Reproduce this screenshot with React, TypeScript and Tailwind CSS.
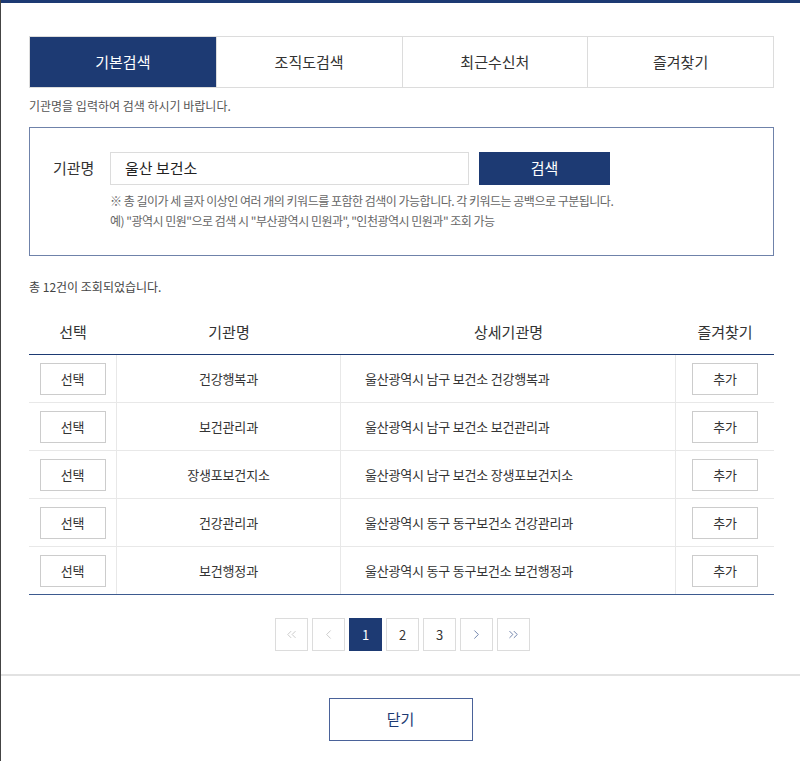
import { ChevronLeft, ChevronRight, ChevronsLeft, ChevronsRight } from "lucide-react"

const tabs = ["기본검색", "조직도검색", "최근수신처", "즐겨찾기"]

const rows = [
  { name: "건강행복과", detail: "울산광역시 남구 보건소 건강행복과" },
  { name: "보건관리과", detail: "울산광역시 남구 보건소 보건관리과" },
  { name: "장생포보건지소", detail: "울산광역시 남구 보건소 장생포보건지소" },
  { name: "건강관리과", detail: "울산광역시 동구 동구보건소 건강관리과" },
  { name: "보건행정과", detail: "울산광역시 동구 동구보건소 보건행정과" },
]

export default function App() {
  return (
    <div
      className="h-[761px] w-[800px] overflow-hidden bg-white border-l border-[#444] text-[#333]"
      style={{ fontFamily: '"Noto Sans CJK KR", "Noto Sans", sans-serif' }}
    >
      {/* top bar */}
      <div className="h-[3px] bg-[#1d3a73]" />

      <div className="pl-[28px] pr-[26px] pt-[33px]">
        {/* tabs */}
        <div className="grid grid-cols-4 h-[52px] border border-[#dcdcdc]">
          {tabs.map((t, i) => (
            <div
              key={t}
              className={
                i === 0
                  ? "flex items-center justify-center bg-[#1d3a73] text-white text-[15px]"
                  : "flex items-center justify-center border-l border-[#dcdcdc] text-[15px] text-[#333]"
              }
            >
              {t}
            </div>
          ))}
        </div>

        <p className="mt-[9px] text-[12px] leading-[18px] text-[#555]">기관명을 입력하여 검색 하시기 바랍니다.</p>

        {/* search box */}
        <div className="mt-[12px] border border-[#6f82aa] pl-[23px] pt-[24px] pb-[24px]">
          <div className="flex items-center">
            <span className="w-[57px] text-[15px] text-[#333]">기관명</span>
            <div className="flex h-[33px] w-[359px] items-center border border-[#dcdcdc] px-[14px] text-[15px] text-[#222]">
              울산 보건소
            </div>
            <button className="ml-[10px] h-[33px] w-[131px] bg-[#1d3a73] text-[15px] text-white">검색</button>
          </div>
          <div className="ml-[57px] mt-[6px] text-[12px] leading-[20px] tracking-[-0.5px] text-[#666]">
            <p>※ 총 길이가 세 글자 이상인 여러 개의 키워드를 포함한 검색이 가능합니다. 각 키워드는 공백으로 구분됩니다.</p>
            <p>예) "광역시 민원"으로 검색 시 "부산광역시 민원과", "인천광역시 민원과" 조회 가능</p>
          </div>
        </div>

        <p className="mt-[22px] text-[12px] leading-[18px] text-[#444]">총 12건이 조회되었습니다.</p>

        {/* table */}
        <div className="mt-[14px]">
          <div className="grid h-[45px] grid-cols-[88px_224px_335px_1fr] items-center border-b border-[#1d3a73] text-[15px] text-[#333]">
            <div className="text-center">선택</div>
            <div className="text-center">기관명</div>
            <div className="text-center">상세기관명</div>
            <div className="text-center">즐겨찾기</div>
          </div>
          {rows.map((r, i) => (
            <div
              key={r.name}
              className={
                i === rows.length - 1
                  ? "grid h-[48px] grid-cols-[88px_224px_335px_1fr] border-b border-[#3d5a8f] text-[13px] tracking-[-0.2px]"
                  : "grid h-[48px] grid-cols-[88px_224px_335px_1fr] border-b border-[#e8e8e8] text-[13px] tracking-[-0.2px]"
              }
            >
              <div className="flex items-center justify-center border-r border-[#e8e8e8]">
                <button className="h-[32px] w-[66px] border border-[#cccccc] text-[13px] text-[#333]">선택</button>
              </div>
              <div className="flex items-center justify-center border-r border-[#e8e8e8] text-[#333]">{r.name}</div>
              <div className="flex items-center border-r border-[#e8e8e8] pl-[24px] text-[#333]">{r.detail}</div>
              <div className="flex items-center justify-center">
                <button className="h-[32px] w-[66px] border border-[#cccccc] text-[13px] text-[#333]">추가</button>
              </div>
            </div>
          ))}
        </div>

        {/* pagination */}
        <div className="mt-[23px] flex justify-center gap-[4px] pl-[2px]">
          <button className="flex h-[33px] w-[33px] items-center justify-center border border-[#dcdcdc] text-[#c8c8c8]">
            <ChevronsLeft size={15} strokeWidth={1.5} />
          </button>
          <button className="flex h-[33px] w-[33px] items-center justify-center border border-[#dcdcdc] text-[#c8c8c8]">
            <ChevronLeft size={15} strokeWidth={1.5} />
          </button>
          <button className="flex h-[33px] w-[33px] items-center justify-center bg-[#1d3a73] text-[13px] text-white">1</button>
          <button className="flex h-[33px] w-[33px] items-center justify-center border border-[#dcdcdc] text-[13px] text-[#333]">2</button>
          <button className="flex h-[33px] w-[33px] items-center justify-center border border-[#dcdcdc] text-[13px] text-[#333]">3</button>
          <button className="flex h-[33px] w-[33px] items-center justify-center border border-[#dcdcdc] text-[#6b7fa8]">
            <ChevronRight size={15} strokeWidth={1.5} />
          </button>
          <button className="flex h-[33px] w-[33px] items-center justify-center border border-[#dcdcdc] text-[#6b7fa8]">
            <ChevronsRight size={15} strokeWidth={1.5} />
          </button>
        </div>
      </div>

      {/* footer */}
      <div className="mt-[23px] h-[2px] bg-[#e2e2e2]" />
      <div className="flex justify-center pt-[22px]">
        <button className="h-[43px] w-[144px] border border-[#4a6299] text-[15px] text-[#1d3a73]">닫기</button>
      </div>
    </div>
  )
}
